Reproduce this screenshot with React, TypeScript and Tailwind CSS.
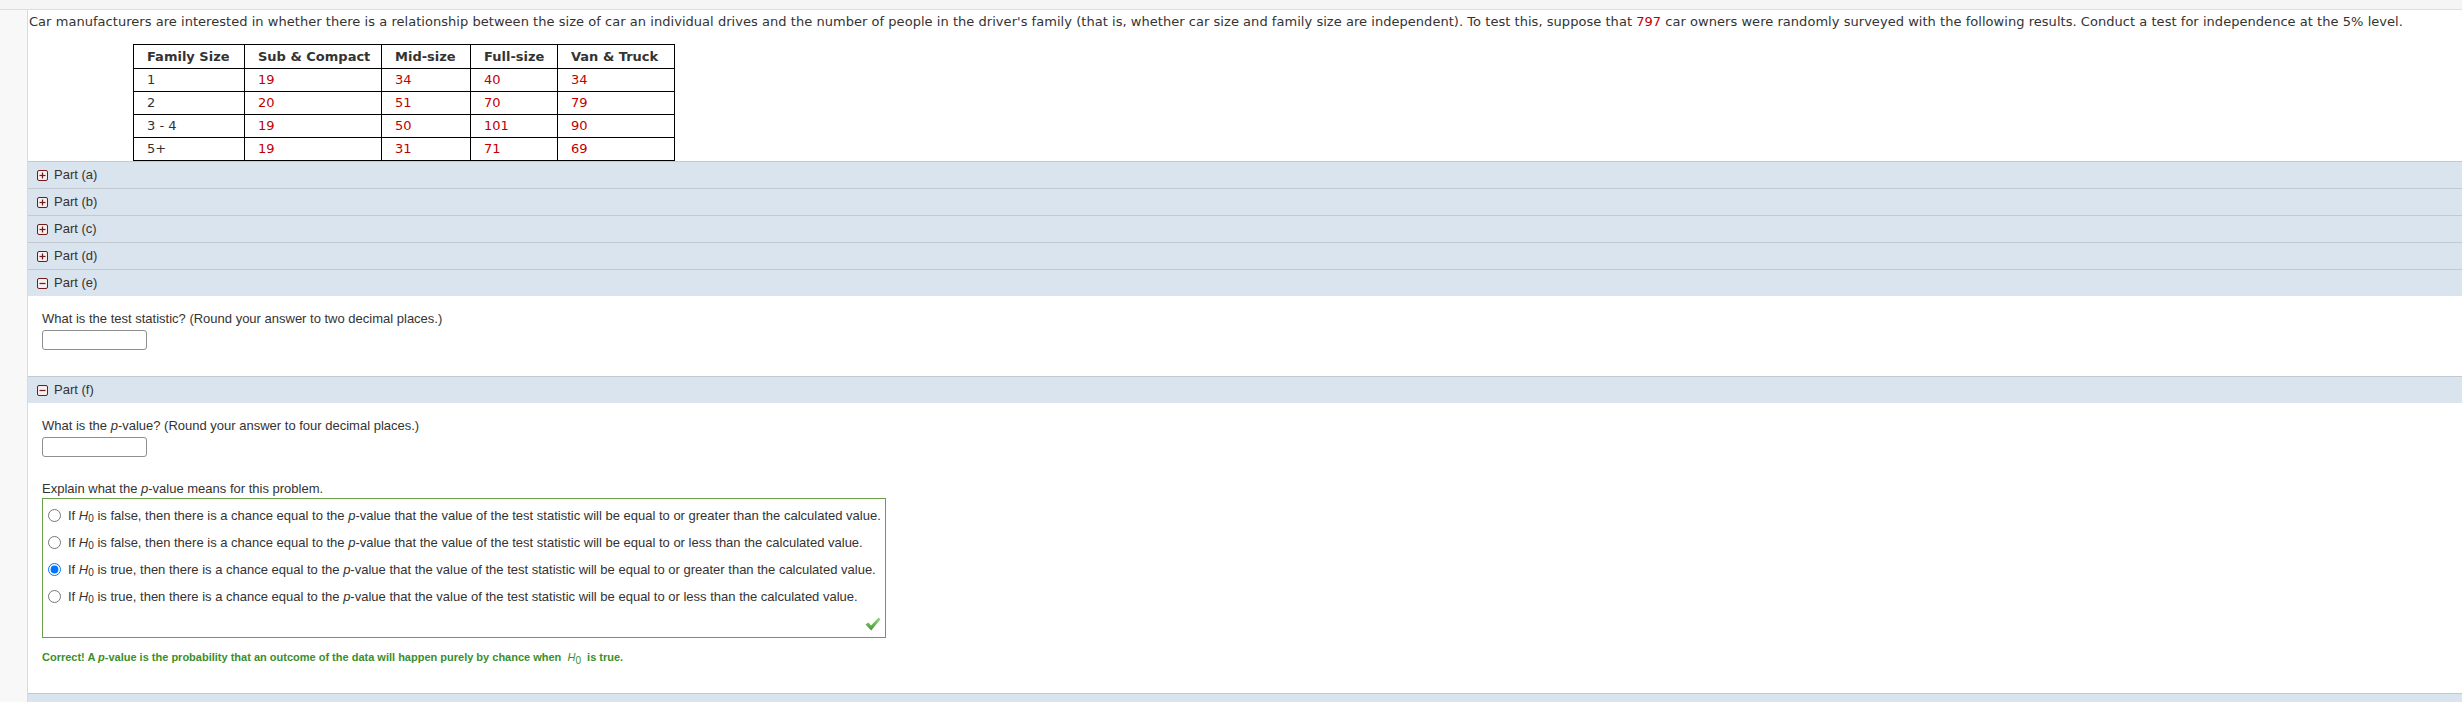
import { ReactNode } from 'react';

const rows = [
  { size: '1', values: ['19', '34', '40', '34'] },
  { size: '2', values: ['20', '51', '70', '79'] },
  { size: '3 - 4', values: ['19', '50', '101', '90'] },
  { size: '5+', values: ['19', '31', '71', '69'] },
];

const headers = ['Family Size', 'Sub & Compact', 'Mid-size', 'Full-size', 'Van & Truck'];
const colWidths = ['w-[111px]', 'w-[137px]', 'w-[89px]', 'w-[87px]', 'w-[117px]'];

function ToggleIcon({ open }: { open: boolean }) {
  return (
    <svg width="11" height="11" viewBox="0 0 11 11" className="shrink-0">
      <rect x="0.5" y="0.5" width="10" height="10" rx="1.5" fill="#f6eeee" stroke="#6e1c1c" />
      <line x1="2.5" y1="5.5" x2="8.5" y2="5.5" stroke="#6e1c1c" strokeWidth="1.2" />
      {!open && <line x1="5.5" y1="2.5" x2="5.5" y2="8.5" stroke="#6e1c1c" strokeWidth="1.2" />}
    </svg>
  );
}

function PartBar({ label, open = false }: { label: string; open?: boolean }) {
  return (
    <div className="flex h-[27px] items-center gap-[6px] border-t border-[#c2c9d0] bg-[#d9e4ee] pl-[9px] text-[13px] text-[#333]">
      <ToggleIcon open={open} />
      <span>{label}</span>
    </div>
  );
}

function H0() {
  return (
    <>
      <i>H</i>
      <sub className="text-[10px]">0</sub>
    </>
  );
}

function Option({ checked, children }: { checked?: boolean; children: ReactNode }) {
  return (
    <label className="flex h-[27px] items-center text-[13px] text-[#333]">
      <input
        type="radio"
        name="pvalue"
        defaultChecked={checked}
        className="ml-[5px] mr-[7px] h-[13px] w-[13px] shrink-0"
      />
      <span className="whitespace-nowrap">{children}</span>
    </label>
  );
}

function CheckMark() {
  return (
    <svg width="16" height="14" viewBox="0 0 16 14">
      <defs>
        <linearGradient id="chk" x1="0" y1="0" x2="0" y2="1">
          <stop offset="0" stopColor="#9bd884" />
          <stop offset="1" stopColor="#3d9632" />
        </linearGradient>
      </defs>
      <path d="M0.5 7.5 L3.4 5.4 L6 8.6 L13.6 0.5 L15.5 2.2 L6.2 13.5 Z" fill="url(#chk)" />
    </svg>
  );
}

export default function App() {
  return (
    <div className="min-h-screen bg-white font-['Liberation_Sans',Arial,sans-serif]">
      <div className="h-[10px] border-b border-[#dedede] bg-[#f5f5f5]" />
      <div className="flex">
        <div className="w-[27px] shrink-0 bg-[#f8f8f8]" />
        <div className="flex-1 border-l border-[#dadada]">
          <p className="pl-[1px] pt-[4px] font-['DejaVu_Sans',Verdana,sans-serif] text-[13px] leading-[16px] tracking-[0.04px] text-[#333]">
            Car manufacturers are interested in whether there is a relationship between the size of car an individual
            drives and the number of people in the driver's family (that is, whether car size and family size are
            independent). To test this, suppose that <span className="text-[#c00000]">797</span> car owners were
            randomly surveyed with the following results. Conduct a test for independence at the 5% level.
          </p>

          <table className="ml-[105px] mt-[14px] border-collapse font-['DejaVu_Sans',Verdana,sans-serif] text-[13px] text-[#333]">
            <thead>
              <tr className="h-[24px]">
                {headers.map((h, i) => (
                  <th key={h} className={`${colWidths[i]} border border-black pl-[13px] text-left font-bold`}>
                    {h}
                  </th>
                ))}
              </tr>
            </thead>
            <tbody>
              {rows.map((r) => (
                <tr key={r.size} className="h-[23px]">
                  <td className="border border-black pl-[13px]">{r.size}</td>
                  {r.values.map((v, i) => (
                    <td key={i} className="border border-black pl-[13px] text-[#c00000]">
                      {v}
                    </td>
                  ))}
                </tr>
              ))}
            </tbody>
          </table>

          <PartBar label="Part (a)" />
          <PartBar label="Part (b)" />
          <PartBar label="Part (c)" />
          <PartBar label="Part (d)" />
          <PartBar label="Part (e)" open />

          <div className="pb-[26px] pl-[14px] pt-[15px] text-[13px] text-[#333]">
            <p className="leading-[15px]">What is the test statistic? (Round your answer to two decimal places.)</p>
            <input type="text" className="mt-[4px] h-[20px] w-[105px] rounded-[3px] border border-[#8f8f8f]" />
          </div>

          <PartBar label="Part (f)" open />

          <div className="pb-[29px] pl-[14px] pt-[15px] text-[13px] text-[#333]">
            <p className="leading-[15px]">
              What is the <i>p</i>-value? (Round your answer to four decimal places.)
            </p>
            <input type="text" className="mt-[4px] h-[20px] w-[105px] rounded-[3px] border border-[#8f8f8f]" />

            <p className="mt-[24px] leading-[15px]">
              Explain what the <i>p</i>-value means for this problem.
            </p>
            <div className="mt-[2px] w-[844px] border border-[#6a9e48] pt-[3px]">
              <Option>
                If <H0 /> is false, then there is a chance equal to the <i>p</i>-value that the value of the test
                statistic will be equal to or greater than the calculated value.
              </Option>
              <Option>
                If <H0 /> is false, then there is a chance equal to the <i>p</i>-value that the value of the test
                statistic will be equal to or less than the calculated value.
              </Option>
              <Option checked>
                If <H0 /> is true, then there is a chance equal to the <i>p</i>-value that the value of the test
                statistic will be equal to or greater than the calculated value.
              </Option>
              <Option>
                If <H0 /> is true, then there is a chance equal to the <i>p</i>-value that the value of the test
                statistic will be equal to or less than the calculated value.
              </Option>
              <div className="flex h-[27px] items-start justify-end pr-[4px] pt-[7px]">
                <CheckMark />
              </div>
            </div>

            <p className="mt-[12px] text-[11px] font-bold leading-[14px] text-[#3a8f2c]">
              Correct! A <i>p</i>-value is the probability that an outcome of the data will happen purely by chance
              when&nbsp; <span className="font-normal"><H0 /></span>&nbsp; is true.
            </p>
          </div>

          <PartBar label="Part (g)" />
        </div>
      </div>
    </div>
  );
}
